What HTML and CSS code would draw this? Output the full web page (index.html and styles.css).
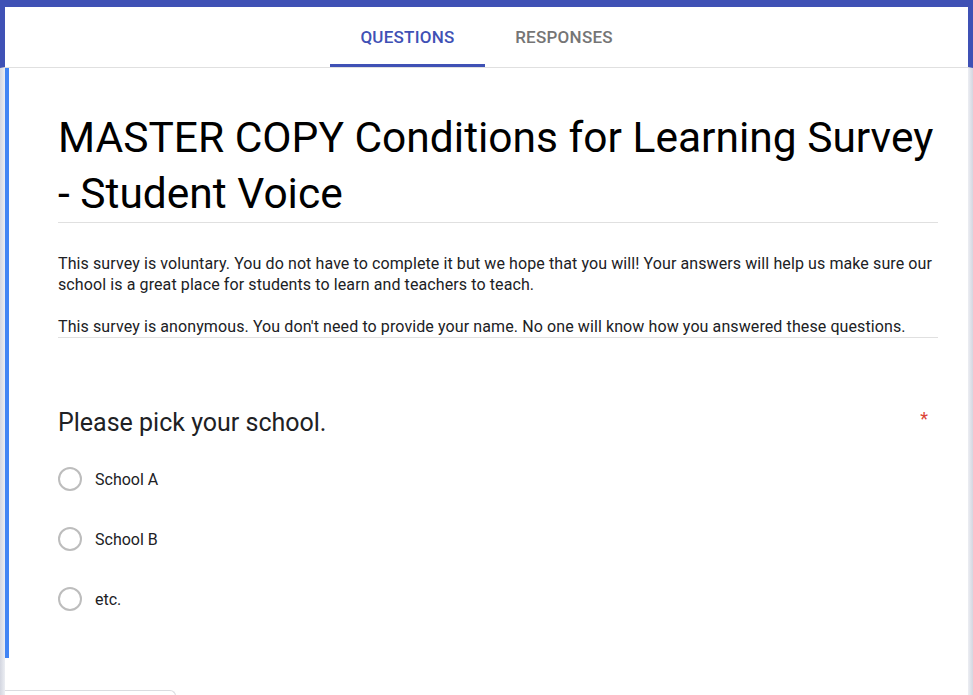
FILE: index.html
```html
<!DOCTYPE html>
<html>
<head>
<title>MASTER COPY Conditions for Learning Survey - Student Voice</title>
<link rel="stylesheet" href="styles.css">
</head>
<body>

<div class="header">
  <div class="tabs">
    <div class="tab active">QUESTIONS</div>
    <div class="tab">RESPONSES</div>
  </div>
</div>

<div class="card">
  <h1 class="form-title">MASTER COPY Conditions for Learning Survey - Student Voice</h1>
  <div class="form-desc">This survey is voluntary. You do not have to complete it but we hope that you will! Your answers will help us make sure our school is a great place for students to learn and teachers to teach.

This survey is anonymous. You don't need to provide your name. No one will know how you answered these questions.</div>

  <div class="question">
    <div class="question-head">
      <span class="question-title">Please pick your school.</span>
      <span class="required">*</span>
    </div>
    <div class="options">
      <div class="option"><span class="radio"></span><span>School A</span></div>
      <div class="option"><span class="radio"></span><span>School B</span></div>
      <div class="option"><span class="radio"></span><span>etc.</span></div>
    </div>
  </div>
</div>

<div class="next-card"></div>

</body>
</html>
```

FILE: styles.css
```css
html, body {
    height: 100%;
}

body {
    margin: 0;
    padding: 0;
    font-family: Roboto, "Liberation Sans", Arial, sans-serif;
    color: #000;
    overflow: hidden;
    background: linear-gradient(to right, #d3d6e0 0, #eceef3 5px, #fff 5px, #fff 968px, #eceef3 968px, #d3d6e0 973px);
}

.header {
    background-color: #fff;
    border-top: 7px solid #3f51b5;
    border-left: 5px solid #3f51b5;
    border-right: 5px solid #3f51b5;
    border-bottom: 1px solid #e0e0e0;
    height: 60px;
    display: flex;
    justify-content: center;
}

.tabs {
    display: flex;
}

.tab {
    width: 155px;
    display: flex;
    align-items: center;
    justify-content: center;
    font-size: 17px;
    font-weight: 500;
    color: #757575;
    letter-spacing: 0.25px;
    box-sizing: border-box;
    border-bottom: 3px solid transparent;
    padding-top: 3px;
}

.tab.active {
    color: #3f51b5;
    border-bottom-color: #3f51b5;
}

.tab + .tab {
    width: 158px;
}

.card {
    margin: 0 5px;
    border-left: 4px solid #4285f4;
    background-color: #fff;
    padding: 42px 30px 34px 49px;
    height: 590px;
    box-sizing: border-box;
}

.form-title {
    font-size: 42.5px;
    font-weight: 400;
    line-height: 56px;
    margin: 0;
    border-bottom: 1px solid #e0e0e0;
}

.form-desc {
    white-space: pre-wrap;
    font-size: 16px;
    letter-spacing: 0.1px;
    line-height: 21px;
    color: #202124;
    margin-top: 30px;
    border-bottom: 1px solid #e0e0e0;
}

.question {
    margin-top: 70px;
}

.question-head {
    display: flex;
    justify-content: space-between;
    align-items: flex-start;
}

.question-title {
    font-size: 25px;
    line-height: 30px;
    color: #202124;
}

.required {
    color: #db4437;
    font-size: 18px;
    margin-right: 10px;
    line-height: 21px;
}

.options {
    margin-top: 29px;
    display: flex;
    flex-direction: column;
    gap: 36px;
}

.option {
    display: flex;
    align-items: center;
    gap: 13px;
    font-size: 16px;
    color: #202124;
    height: 24px;
}

.radio {
    width: 24px;
    height: 24px;
    box-sizing: border-box;
    border: 2.5px solid #bdbdbd;
    border-radius: 50%;
}

.next-card {
    margin: 32px 0 0 5px;
    width: 170px;
    height: 20px;
    border-top: 1px solid #dadce0;
    border-right: 1px solid #dadce0;
    border-top-right-radius: 6px;
    background: #fff;
}
```
